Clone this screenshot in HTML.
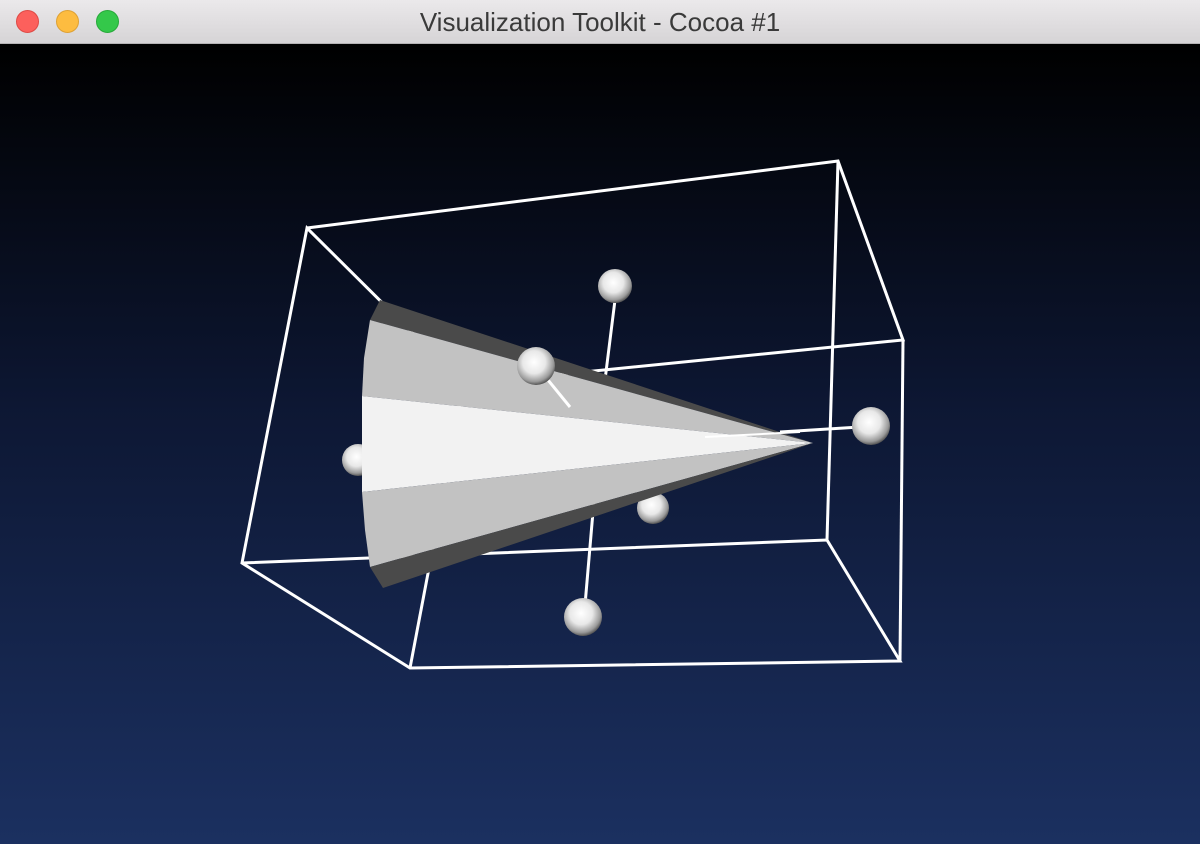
<!DOCTYPE html>
<html><head><style>
html,body{margin:0;padding:0;width:1200px;height:844px;overflow:hidden;}
.tb{position:absolute;left:0;top:0;width:1200px;height:44px;background:linear-gradient(#ebe9eb,#d6d4d6);border-bottom:1px solid #b5b3b5;box-sizing:border-box;font-family:"Liberation Sans",sans-serif;font-size:26px;color:#3a3a3a;text-align:center;line-height:44px;}
.c{position:absolute;top:10px;width:23px;height:23px;border-radius:50%;box-sizing:border-box;}
svg{position:absolute;left:0;top:44px;}
</style></head><body>
<div class="tb">Visualization Toolkit - Cocoa #1
<div class="c" style="left:16px;background:#fc605c;border:1px solid #de4a45"></div>
<div class="c" style="left:56px;background:#fdbc40;border:1px solid #dea134"></div>
<div class="c" style="left:96px;background:#34c84a;border:1px solid #27a93a"></div>
</div>
<svg width="1200" height="800" viewBox="0 44 1200 800">
<defs>
<linearGradient id="bg" x1="0" y1="0" x2="0" y2="1"><stop offset="0" stop-color="#000000"/><stop offset="0.45" stop-color="#0d1733"/><stop offset="1" stop-color="#1b3060"/></linearGradient>
<radialGradient id="sp" cx="0.45" cy="0.4" r="0.6"><stop offset="0" stop-color="#ffffff"/><stop offset="0.5" stop-color="#e8e8e8"/><stop offset="0.85" stop-color="#9a9a9a"/><stop offset="1" stop-color="#555"/></radialGradient>
</defs>
<rect x="0" y="44" width="1200" height="800" fill="url(#bg)"/>
<g stroke="#fff" stroke-width="3" fill="none">
<polyline points="307,228 838,161 903,340 464,384 307,228 242,563 410,668 900,661 827,540 242,563"/>
<line x1="838" y1="161" x2="827" y2="540"/>
<line x1="903" y1="340" x2="900" y2="661"/>
<line x1="464" y1="384" x2="410" y2="668"/>
<line x1="615" y1="300" x2="605" y2="380"/>
<line x1="594" y1="500" x2="585" y2="605"/>
<line x1="780" y1="432" x2="860" y2="427"/>
</g>
<circle cx="358" cy="460" r="16" fill="url(#sp)"/>
<circle cx="615" cy="286" r="17" fill="url(#sp)"/>
<circle cx="653" cy="508" r="16" fill="url(#sp)"/>
<polygon points="380,300 370,320 813,443" fill="#4a4a4a"/>
<polygon points="370,320 364,358 362,396 813,443" fill="#c2c2c2"/>
<polygon points="362,396 362,492 813,443" fill="#f2f2f2"/>
<polygon points="362,492 365,530 370,567 813,443" fill="#c2c2c2"/>
<polygon points="370,567 383,588 813,443" fill="#4a4a4a"/>
<g stroke="#fff" stroke-width="3"><line x1="548" y1="380" x2="570" y2="407"/><line x1="705" y1="437" x2="800" y2="432" stroke-width="2"/></g>
<circle cx="536" cy="366" r="19" fill="url(#sp)"/>
<circle cx="871" cy="426" r="19" fill="url(#sp)"/>
<circle cx="583" cy="617" r="19" fill="url(#sp)"/>
</svg>
</body></html>
